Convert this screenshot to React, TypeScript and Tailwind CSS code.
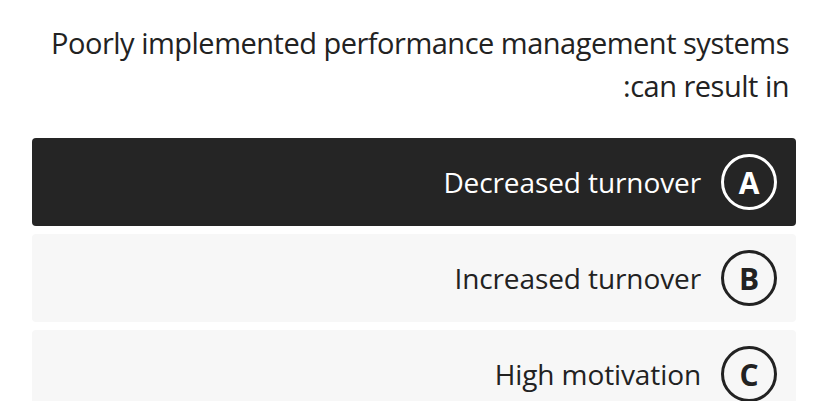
const options = [
  { letter: 'A', label: 'Decreased turnover', selected: true },
  { letter: 'B', label: 'Increased turnover', selected: false },
  { letter: 'C', label: 'High motivation', selected: false },
];

export default function App() {
  return (
    <div
      className="w-[828px] h-[417px] bg-white overflow-hidden"
      style={{ fontFamily: '"Open Sans", sans-serif' }}
    >
      <div className="h-[401px] overflow-hidden px-8 pt-[21px]">
        <p className="text-right text-[#222] text-[29px] leading-[43px] pr-[7px] tracking-[-0.5px]">
          Poorly implemented performance management systems
          <br />
          :can result in
        </p>

        <div className="mt-[31px] flex flex-col gap-[8px]">
          {options.map((o) => (
            <div
              key={o.letter}
              className={`h-[88px] shrink-0 rounded-[4px] flex items-center justify-end gap-[20px] pr-[19px] ${
                o.selected ? 'bg-[#252525] text-white' : 'bg-[#f7f7f7] text-[#222]'
              }`}
            >
              <span className="text-[28px] tracking-[-0.1px]">{o.label}</span>
              <span
                className={`w-[56px] h-[56px] rounded-full border-[3px] flex items-center justify-center text-[30px] font-bold ${
                  o.selected ? 'border-white' : 'border-[#222]'
                }`}
              >
                {o.letter}
              </span>
            </div>
          ))}
        </div>
      </div>
    </div>
  );
}
